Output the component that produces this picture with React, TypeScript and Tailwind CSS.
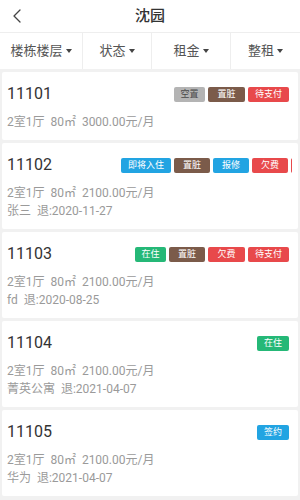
import React from "react";

type Tag = { label: string; tone: "gray" | "brown" | "red" | "blue" | "green"; w: number };

type Room = {
  no: string;
  info: string;
  tenant?: string;
  tags: Tag[];
};

const toneClass: Record<Tag["tone"], string> = {
  gray: "bg-[#b4b4b4] text-[#4a4a4a]",
  brown: "bg-[#7b5b4a] text-white",
  red: "bg-[#e8494b] text-white",
  blue: "bg-[#22a4e2] text-white",
  green: "bg-[#25b877] text-white",
};

const rooms: Room[] = [
  {
    no: "11101",
    info: "2室1厅  80㎡  3000.00元/月",
    tags: [
      { label: "空置", tone: "gray", w: 31 },
      { label: "置脏", tone: "brown", w: 37 },
      { label: "待支付", tone: "red", w: 41 },
    ],
  },
  {
    no: "11102",
    info: "2室1厅  80㎡  2100.00元/月",
    tenant: "张三  退:2020-11-27",
    tags: [
      { label: "即将入住", tone: "blue", w: 50 },
      { label: "置脏", tone: "brown", w: 36 },
      { label: "报修", tone: "blue", w: 36 },
      { label: "欠费", tone: "red", w: 36 },
      { label: "待支付", tone: "red", w: 41 },
    ],
  },
  {
    no: "11103",
    info: "2室1厅  80㎡  2100.00元/月",
    tenant: "fd  退:2020-08-25",
    tags: [
      { label: "在住", tone: "green", w: 31 },
      { label: "置脏", tone: "brown", w: 36 },
      { label: "欠费", tone: "red", w: 37 },
      { label: "待支付", tone: "red", w: 41 },
    ],
  },
  {
    no: "11104",
    info: "2室1厅  80㎡  2100.00元/月",
    tenant: "菁英公寓  退:2021-04-07",
    tags: [{ label: "在住", tone: "green", w: 32 }],
  },
  {
    no: "11105",
    info: "2室1厅  80㎡  2100.00元/月",
    tenant: "华为  退:2021-04-07",
    tags: [{ label: "签约", tone: "blue", w: 32 }],
  },
];

const filters = [
  { label: "楼栋楼层", w: "w-[82px]" },
  { label: "状态", w: "w-[69px]" },
  { label: "租金", w: "w-[79px]" },
  { label: "整租", w: "w-[70px]" },
];

const Caret = () => (
  <span className="ml-[3px] inline-block w-0 h-0 border-l-[3px] border-r-[3px] border-t-[4px] border-l-transparent border-r-transparent border-t-[#444]" />
);

const RoomCard = ({ room }: { room: Room }) => (
  <div className="bg-white rounded-[2px] pl-[5px] pr-[6px] pt-[12px] pb-[9px]">
    <div className="flex items-center h-[20px]">
      <div className="w-[114px] shrink-0 text-[16px] leading-[20px] text-[#333]">{room.no}</div>
      <div className="flex-1 min-w-0 flex overflow-hidden [justify-content:safe_flex-end]">
        {room.tags.map((t, i) => (
          <span
            key={i}
            style={{ width: t.w }}
            className={`shrink-0 mr-[3px] h-[15px] rounded-[2px] flex items-center justify-center text-[9px] leading-none ${toneClass[t.tone]}`}
          >
            {t.label}
          </span>
        ))}
      </div>
    </div>
    <div className="mt-[9px] text-[12px] leading-[18px] text-[#9a9a9a] whitespace-pre">{room.info}</div>
    {room.tenant && (
      <div className="text-[12px] leading-[18px] text-[#9a9a9a] whitespace-pre">{room.tenant}</div>
    )}
  </div>
);

export default function App() {
  return (
    <div
      className="w-[300px] h-[500px] overflow-hidden bg-[#f1f1f1]"
      style={{ fontFamily: 'Roboto, "Noto Sans CJK SC", sans-serif' }}
    >
      <div className="h-[32px] bg-white grid grid-cols-[1fr_auto_1fr] items-center">
        <div className="pl-[12px] flex items-center">
          <svg width="10" height="14" viewBox="0 0 10 14" fill="none">
            <path d="M8 1 L2 7 L8 13" stroke="#444" strokeWidth="1.3" strokeLinecap="round" strokeLinejoin="round" />
          </svg>
        </div>
        <div className="text-[15px] font-medium text-[#333]">沈园</div>
        <div />
      </div>

      <div className="h-[37px] bg-white border-t border-[#eeeeee] flex">
        {filters.map((f, i) => (
          <div
            key={f.label}
            className={`${f.w} flex items-center justify-center text-[13px] text-[#555] ${i > 0 ? "border-l border-[#eeeeee]" : ""}`}
          >
            {f.label}
            <Caret />
          </div>
        ))}
      </div>

      <div className="flex flex-col gap-[3px] pt-[3px] px-[2px]">
        {rooms.map((r) => (
          <RoomCard key={r.no} room={r} />
        ))}
      </div>
    </div>
  );
}
